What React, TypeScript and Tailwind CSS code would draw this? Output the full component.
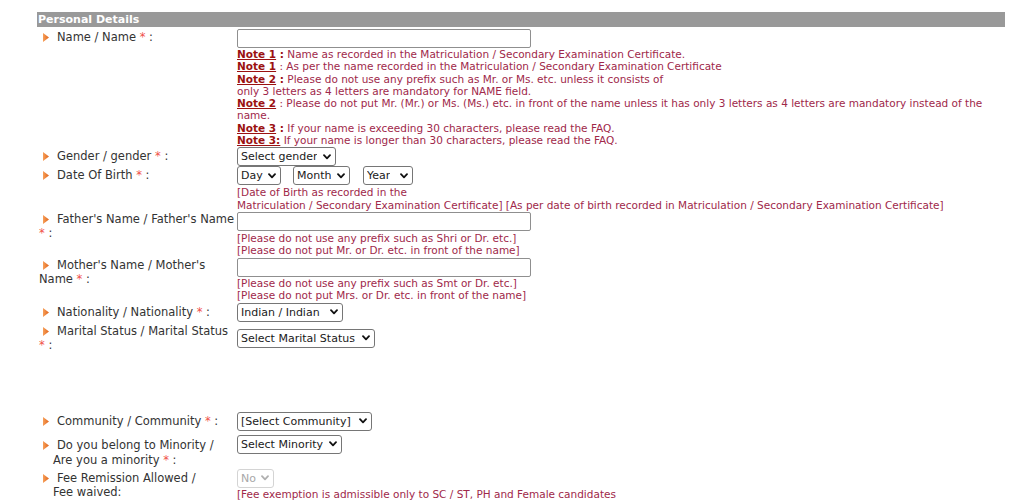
import React from "react";

const Bullet = () => (
  <svg width="6" height="9" viewBox="0 0 6 9" className="inline-block align-[-1px] mr-[8px] ml-[4px]">
    <defs>
      <linearGradient id="bg1" x1="0" y1="0" x2="1" y2="0">
        <stop offset="0" stopColor="#f7a05a" />
        <stop offset="1" stopColor="#e0651c" />
      </linearGradient>
    </defs>
    <path d="M0 0 L6 4.5 L0 9 Z" fill="url(#bg1)" />
  </svg>
);

const Star = () => <span className="text-[#f0504a]">*</span>;

const font = { fontFamily: '"DejaVu Sans", Verdana, sans-serif' };

function Label({ children, className = "" }: { children: React.ReactNode; className?: string }) {
  return (
    <div className={"w-[198px] shrink-0 pl-[2px] text-[11.5px] leading-[14px] text-[#333] " + className}>
      {children}
    </div>
  );
}

const Chevron = ({ color = "#111" }: { color?: string }) => (
  <svg width="8" height="6" viewBox="0 0 8 6" className="shrink-0">
    <path d="M1 1.2 L4 4.3 L7 1.2" fill="none" stroke={color} strokeWidth="1.8" strokeLinecap="round" strokeLinejoin="round" />
  </svg>
);

function Sel({
  text,
  w,
  disabled = false,
  className = "",
}: {
  text: string;
  w: string;
  disabled?: boolean;
  className?: string;
}) {
  return (
    <div
      className={
        "h-[19px] flex items-center justify-between rounded-[3px] bg-white pl-[3px] pr-[4px] text-[11px] leading-[13px] border " +
        (disabled ? "border-[#d4d4d4] text-[#a8a8a8] " : "border-[#767676] text-[#1a1a1a] ") +
        w +
        " " +
        className
      }
    >
      <span className="whitespace-nowrap overflow-hidden">{text}</span>
      <Chevron color={disabled ? "#b0b0b0" : "#111"} />
    </div>
  );
}

const inpCls = "w-[294px] h-[19px] border border-[#8f8f8f] rounded-[2px] bg-white block";
const noteCls = "text-[10.5px] leading-[12.3px] text-[#a0284a]";

const NoteLbl = ({ n }: { n: string }) => (
  <span className="font-bold underline text-[#9b1111]">{n}</span>
);
const Colon = () => <span className="font-bold text-[#9b1111]"> :</span>;

export default function App() {
  return (
    <div className="bg-white w-[1024px] h-[500px] overflow-hidden" style={font}>
      <div className="ml-[37px] pt-[12px] w-[968px]">
        <div className="h-[15px] bg-[#999999] text-white font-bold text-[11px] leading-[15px] pl-[1px]">
          Personal Details
        </div>

        {/* Name */}
        <div className="flex mt-[2px]">
          <Label className="pt-[1px]">
            <Bullet />
            Name / Name <Star /> :
          </Label>
          <div className="pl-[2px]">
            <input className={inpCls} />
            <div className={noteCls + " w-[768px]"}>
              <div>
                <NoteLbl n="Note 1" />
                <Colon /> Name as recorded in the Matriculation / Secondary Examination Certificate.
              </div>
              <div>
                <NoteLbl n="Note 1" /> : As per the name recorded in the Matriculation / Secondary Examination Certificate
              </div>
              <div>
                <NoteLbl n="Note 2" />
                <Colon /> Please do not use any prefix such as Mr. or Ms. etc. unless it consists of
                <br />
                only 3 letters as 4 letters are mandatory for NAME field.
              </div>
              <div>
                <NoteLbl n="Note 2" /> : Please do not put Mr. (Mr.) or Ms. (Ms.) etc. in front of the name unless it has only 3 letters as 4 letters are mandatory instead of the name.
              </div>
              <div>
                <NoteLbl n="Note 3" />
                <Colon /> If your name is exceeding 30 characters, please read the FAQ.
              </div>
              <div>
                <NoteLbl n="Note 3:" /> If your name is longer than 30 characters, please read the FAQ.
              </div>
            </div>
          </div>
        </div>

        {/* Gender */}
        <div className="flex mt-[1px]">
          <Label className="pt-[2px]">
            <Bullet />
            Gender / gender <Star /> :
          </Label>
          <div className="pl-[2px]">
            <Sel text="Select gender" w="w-[99px]" />
          </div>
        </div>

        {/* DOB */}
        <div className="flex">
          <Label className="pt-[2px]">
            <Bullet />
            Date Of Birth <Star /> :
          </Label>
          <div className="pl-[2px]">
            <div className="flex">
              <Sel text="Day" w="w-[44px]" />
              <Sel text="Month" w="w-[57px]" className="ml-[12px]" />
              <Sel text="Year" w="w-[50px]" className="ml-[13px]" />
            </div>
            <div className={noteCls + " leading-[12.6px] mt-[1px]"}>
              [Date of Birth as recorded in the
              <br />
              Matriculation / Secondary Examination Certificate] [As per date of birth recorded in Matriculation / Secondary Examination Certificate]
            </div>
          </div>
        </div>

        {/* Father */}
        <div className="flex">
          <Label className="leading-[13.5px]">
            <Bullet />
            Father's Name / Father's Name <Star /> :
          </Label>
          <div className="pl-[2px]">
            <input className={inpCls} />
            <div className={noteCls + " mt-[1px]"}>
              [Please do not use any prefix such as Shri or Dr. etc.]
              <br />
              [Please do not put Mr. or Dr. etc. in front of the name]
            </div>
          </div>
        </div>

        {/* Mother */}
        <div className="flex mt-[2px]">
          <Label>
            <Bullet />
            Mother's Name / Mother's Name <Star /> :
          </Label>
          <div className="pl-[2px]">
            <input className={inpCls} />
            <div className={noteCls}>
              [Please do not use any prefix such as Smt or Dr. etc.]
              <br />
              [Please do not put Mrs. or Dr. etc. in front of the name]
            </div>
          </div>
        </div>

        {/* Nationality */}
        <div className="flex mt-[1px]">
          <Label className="pt-[2px]">
            <Bullet />
            Nationality / Nationality <Star /> :
          </Label>
          <div className="pl-[2px]">
            <Sel text="Indian / Indian" w="w-[106px]" />
          </div>
        </div>

        {/* Marital */}
        <div className="flex h-[90px]">
          <Label className="pt-[2px]">
            <Bullet />
            Marital Status / Marital Status <Star /> :
          </Label>
          <div className="pl-[2px] pt-[7px]">
            <Sel text="Select Marital Status" w="w-[138px]" />
          </div>
        </div>

        {/* Community */}
        <div className="flex">
          <Label className="pt-[2px]">
            <Bullet />
            Community / Community <Star /> :
          </Label>
          <div className="pl-[2px]">
            <Sel text="[Select Community]" w="w-[135px]" />
          </div>
        </div>

        {/* Minority */}
        <div className="flex mt-[4px]">
          <Label className="pt-[3px] leading-[15px]">
            <Bullet />
            Do you belong to Minority /
            <br />
            <span className="pl-[14px]">
              Are you a minority <Star /> :
            </span>
          </Label>
          <div className="pl-[2px]">
            <Sel text="Select Minority" w="w-[105px]" />
          </div>
        </div>

        {/* Fee */}
        <div className="flex mt-[1px]">
          <Label className="pt-[2px] leading-[14.5px]">
            <Bullet />
            Fee Remission Allowed /
            <br />
            <span className="pl-[14px]">Fee waived:</span>
          </Label>
          <div className="pl-[2px]">
            <Sel text="No" w="w-[37px]" disabled />
            <div className={noteCls}>
              [Fee exemption is admissible only to SC / ST, PH and Female candidates
            </div>
          </div>
        </div>
      </div>
    </div>
  );
}
